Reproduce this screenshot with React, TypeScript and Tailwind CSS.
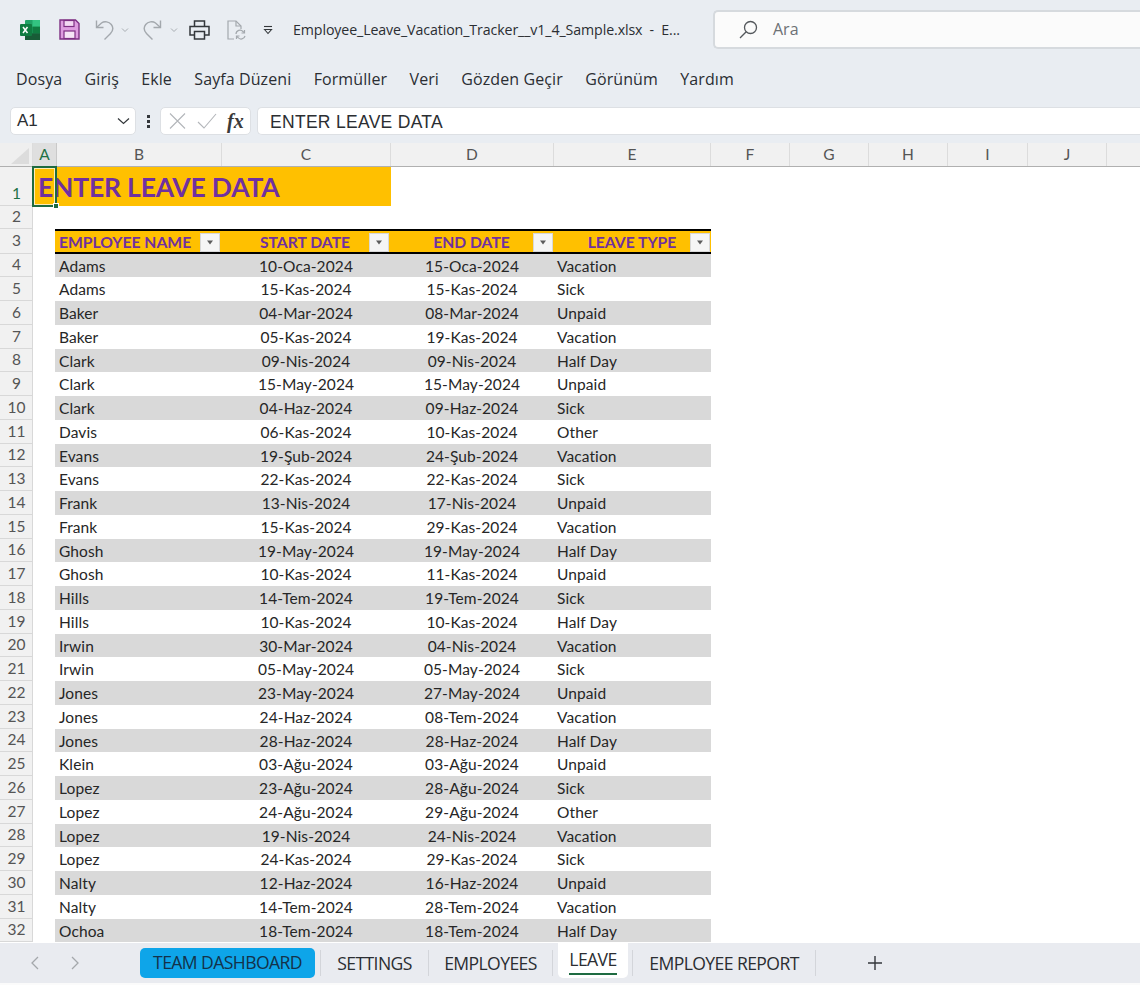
import React from "react";

const rows: [string, string, string, string][] = [
  ["Adams", "10-Oca-2024", "15-Oca-2024", "Vacation"],
  ["Adams", "15-Kas-2024", "15-Kas-2024", "Sick"],
  ["Baker", "04-Mar-2024", "08-Mar-2024", "Unpaid"],
  ["Baker", "05-Kas-2024", "19-Kas-2024", "Vacation"],
  ["Clark", "09-Nis-2024", "09-Nis-2024", "Half Day"],
  ["Clark", "15-May-2024", "15-May-2024", "Unpaid"],
  ["Clark", "04-Haz-2024", "09-Haz-2024", "Sick"],
  ["Davis", "06-Kas-2024", "10-Kas-2024", "Other"],
  ["Evans", "19-Şub-2024", "24-Şub-2024", "Vacation"],
  ["Evans", "22-Kas-2024", "22-Kas-2024", "Sick"],
  ["Frank", "13-Nis-2024", "17-Nis-2024", "Unpaid"],
  ["Frank", "15-Kas-2024", "29-Kas-2024", "Vacation"],
  ["Ghosh", "19-May-2024", "19-May-2024", "Half Day"],
  ["Ghosh", "10-Kas-2024", "11-Kas-2024", "Unpaid"],
  ["Hills", "14-Tem-2024", "19-Tem-2024", "Sick"],
  ["Hills", "10-Kas-2024", "10-Kas-2024", "Half Day"],
  ["Irwin", "30-Mar-2024", "04-Nis-2024", "Vacation"],
  ["Irwin", "05-May-2024", "05-May-2024", "Sick"],
  ["Jones", "23-May-2024", "27-May-2024", "Unpaid"],
  ["Jones", "24-Haz-2024", "08-Tem-2024", "Vacation"],
  ["Jones", "28-Haz-2024", "28-Haz-2024", "Half Day"],
  ["Klein", "03-Ağu-2024", "03-Ağu-2024", "Unpaid"],
  ["Lopez", "23-Ağu-2024", "28-Ağu-2024", "Sick"],
  ["Lopez", "24-Ağu-2024", "29-Ağu-2024", "Other"],
  ["Lopez", "19-Nis-2024", "24-Nis-2024", "Vacation"],
  ["Lopez", "24-Kas-2024", "29-Kas-2024", "Sick"],
  ["Nalty", "12-Haz-2024", "16-Haz-2024", "Unpaid"],
  ["Nalty", "14-Tem-2024", "28-Tem-2024", "Vacation"],
  ["Ochoa", "18-Tem-2024", "18-Tem-2024", "Half Day"],
];

const menu = ["Dosya", "Giriş", "Ekle", "Sayfa Düzeni", "Formüller", "Veri", "Gözden Geçir", "Görünüm", "Yardım"];

const ExcelLogo = () => (
  <svg width="22" height="22" viewBox="0 0 22 22">
    <rect x="6" y="1" width="15" height="20" rx="1" fill="#21a366" />
    <rect x="13.5" y="1" width="7.5" height="6.7" fill="#33c481" />
    <rect x="13.5" y="7.7" width="7.5" height="6.6" fill="#107c41" />
    <rect x="6" y="14.3" width="15" height="6.7" fill="#185c37" />
    <rect x="1" y="5" width="12" height="12" rx="1" fill="#107c41" />
    <path d="M4 8l4.5 6M8.5 8L4 14" stroke="#fff" strokeWidth="1.5" fill="none" />
  </svg>
);

const SaveIcon = () => (
  <svg width="21" height="21" viewBox="0 0 21 21">
    <path d="M1 1h15.500l3.500 3.500V20H1z" fill="#de9de0" stroke="#7d2f83" strokeWidth="1.4" />
    <rect x="5" y="1.500" width="10" height="6" fill="#f3d9f3" stroke="#7d2f83" strokeWidth="1.2" />
    <rect x="5" y="12" width="11" height="7.500" fill="#f6e4f6" stroke="#7d2f83" strokeWidth="1.2" />
  </svg>
);

const Undo = ({ flip }: { flip?: boolean }) => (
  <svg width="19" height="21" viewBox="0 0 19 21" className={flip ? "-scale-x-100" : ""} fill="none" stroke="#a3a8ad" strokeWidth="1.4">
    <path d="M1.500 1.500v7h7" />
    <path d="M1.800 8.200L6.500 4c3-2.200 7.500-1.300 9.800 1.500 2.300 3 1.500 6.500-.8 9l-6 6" />
  </svg>
);

const TinyChevron = () => (
  <svg width="8" height="6" viewBox="0 0 8 6" fill="none" stroke="#a8adb2" strokeWidth="1"><path d="M1 1.500l3 3 3-3" /></svg>
);

const PrintIcon = () => (
  <svg width="21" height="20" viewBox="0 0 21 20" fill="none" stroke="#33373b" strokeWidth="1.5">
    <path d="M5.500 6V1h10v5" />
    <path d="M5 15H1V6.500h19V15h-4" />
    <rect x="5.500" y="11.500" width="10" height="7.500" />
  </svg>
);

const DocSync = () => (
  <svg width="19" height="20" viewBox="0 0 19 20" fill="none" stroke="#a3a8ad" strokeWidth="1.2">
    <path d="M7 19H1V1h8l5 5v3" />
    <path d="M9 1v5h5" />
    <path d="M9 14a4 4 0 0 1 7-2.500l1 1M18 16a4 4 0 0 1-7 1.500l-1-1" />
    <path d="M17.500 10v3h-3M9.500 19v-3h3" />
  </svg>
);

const QatMore = () => (
  <svg width="10" height="10" viewBox="0 0 10 10" fill="none" stroke="#33373b" strokeWidth="1.1">
    <path d="M1 1.500h8" />
    <path d="M1.500 4.500L5 8.500l3.500-4z" />
  </svg>
);

const SearchIcon = () => (
  <svg width="19" height="19" viewBox="0 0 19 19" fill="none" stroke="#54585c" strokeWidth="1.3">
    <circle cx="11.500" cy="7.500" r="6" />
    <path d="M7.200 11.800L1 18" />
  </svg>
);

const FilterBtn = () => (
  <div className="w-[20px] h-[19px] bg-[#f5f5f5] border border-[#d8d8d8] flex items-center justify-center shrink-0">
    <svg width="8" height="5" viewBox="0 0 8 5"><path d="M1 0.500h6L4 4.500z" fill="#5c5c5c" /></svg>
  </div>
);

const Sep = () => <div className="w-px h-[26px] bg-[#d3d5da] shrink-0" />;

const ColHead = ({ w, label, active }: { w: string; label: string; active?: boolean }) => (
  <div className={`${w} h-full flex items-center justify-center border-r text-[15.5px] ${active ? "bg-[#dfdfdf] border-[#c9c9c9] text-[#1e7145]" : "bg-[#f1f1f1] border-[#dcdcdc] text-[#555]"}`}>
    {label}
  </div>
);

const RowHead = ({ n, active, className = "" }: { n: number; active?: boolean; className?: string }) => (
  <div className={`w-[33px] shrink-0 h-full bg-[#f1f1f1] border-r border-[#cfcfcf] flex justify-center pl-[1px] text-[15.5px] ${active ? "text-[#1e7145] bg-[#e6e6e6] items-end" : "text-[#555] items-center"} ${className}`}>
    {n}
  </div>
);

export default function App() {
  return (
    <div className="w-[1140px] h-[985px] overflow-hidden bg-white flex flex-col font-['Lato',sans-serif]">
      {/* Title bar and menu */}
      <div className="h-[143px] shrink-0 bg-[#e9edf2] flex flex-col font-['Open_Sans',sans-serif] text-[#2b2e32]">
        <div className="h-[59px] flex items-center pl-[19px]">
          <ExcelLogo />
          <div className="ml-[18px]"><SaveIcon /></div>
          <div className="ml-[15px]"><Undo /></div>
          <div className="ml-[7px]"><TinyChevron /></div>
          <div className="ml-[14px]"><Undo flip /></div>
          <div className="ml-[8px]"><TinyChevron /></div>
          <div className="ml-[11px]"><PrintIcon /></div>
          <div className="ml-[17px]"><DocSync /></div>
          <div className="ml-[17px]"><QatMore /></div>
          <div className="ml-[20px] w-[400px] text-[14.2px] tracking-[-0.1px] whitespace-pre">Employee_Leave_Vacation_Tracker__v1_4_Sample.xlsx  -  E...</div>
          <div className="ml-[20px] flex-1 h-[39px] -mt-[1px] bg-[#fbfbfb] rounded-l-[5px] border-2 border-r-0 border-[#d6dade] flex items-center pl-[24px] gap-[15px]">
            <SearchIcon />
            <span className="text-[16px] text-[#6d7175]">Ara</span>
          </div>
        </div>
        <div className="h-[40px] flex items-center pl-[16px] gap-[22.3px] text-[16px] tracking-[0.1px]">
          {menu.map((m) => <span key={m}>{m}</span>)}
        </div>
        <div className="h-[28px] mt-[8px] flex items-stretch pl-[10px]">
          <div className="w-[126px] bg-white rounded-[5px] border border-[#dde0e4] flex items-center justify-between pl-[6px] pr-[5px] font-['Liberation_Sans',sans-serif] text-[17px]">
            <span>A1</span>
            <svg width="13" height="8" viewBox="0 0 13 8" fill="none" stroke="#33373b" strokeWidth="1.2"><path d="M1 1.500l5.500 5 5.500-5" /></svg>
          </div>
          <div className="w-[24px] flex flex-col items-center justify-center gap-[2px]">
            <div className="w-[3px] h-[3px] bg-[#33373b]" />
            <div className="w-[3px] h-[3px] bg-[#33373b]" />
            <div className="w-[3px] h-[3px] bg-[#33373b]" />
          </div>
          <div className="w-[91px] bg-white rounded-[5px] border border-[#dde0e4] flex items-center pl-[8px]">
            <svg width="48" height="18" viewBox="0 0 48 18" fill="none" stroke="#b3b6ba" strokeWidth="1.1">
              <path d="M1 1.500l15 15M16 1.500l-15 15" />
              <path d="M29 10l6 6L47 2" />
            </svg>
            <span className="ml-[10px] font-['Liberation_Serif',serif] italic font-bold text-[20px] text-[#3a3a3a] leading-none">fx</span>
          </div>
          <div className="ml-[6px] flex-1 bg-white rounded-l-[5px] border border-r-0 border-[#dde0e4] flex items-center pl-[12px] pt-[2px] font-['Liberation_Sans',sans-serif] text-[17.5px] tracking-[0.3px]">
            ENTER LEAVE DATA
          </div>
        </div>
      </div>

      {/* Column headers */}
      <div className="h-[24px] shrink-0 flex border-b border-[#b0b0b0]">
        <div className="w-[33px] h-full bg-[#efefef] border-r border-[#dcdcdc] flex items-end justify-end pr-[2px] pb-[2px]">
          <svg width="20" height="16" viewBox="0 0 20 16"><path d="M19 0v16H1z" fill="#dcdcdc" /></svg>
        </div>
        <ColHead w="w-[24px]" label="A" active />
        <ColHead w="w-[165px]" label="B" />
        <ColHead w="w-[169px]" label="C" />
        <ColHead w="w-[163px]" label="D" />
        <ColHead w="w-[157px]" label="E" />
        <ColHead w="w-[79px]" label="F" />
        <ColHead w="w-[79px]" label="G" />
        <ColHead w="w-[79px]" label="H" />
        <ColHead w="w-[80px]" label="I" />
        <ColHead w="w-[79px]" label="J" />
        <div className="flex-1 bg-[#f1f1f1]" />
      </div>

      {/* Sheet */}
      <div className="flex-1 flex flex-col min-h-0 text-[#262626]">
        <div className="h-[39px] shrink-0 flex relative">
          <RowHead n={1} active className="border-b border-[#d8d8d8]" />
          <div className="w-[358px] bg-[#ffc000] flex items-center pl-[5px] pt-[2px] font-bold text-[26.5px] text-[#7030a0] tracking-[-0.2px] whitespace-nowrap">
            ENTER LEAVE DATA
          </div>
          <div className="absolute left-[32px] top-[-1px] w-[25px] h-[41px] border-2 border-[#1e6b41] outline outline-1 outline-white/70 -outline-offset-3">
            <div className="absolute right-[-4px] bottom-[-4px] w-[6px] h-[6px] bg-[#1e6b41] border border-white" />
          </div>
        </div>
        <div className="h-[23px] shrink-0 flex">
          <RowHead n={2} className="border-b border-[#d8d8d8]" />
        </div>
        <div className="h-[24.500px] shrink-0 flex">
          <RowHead n={3} className="border-b border-[#d8d8d8]" />
          <div className="w-[22px] shrink-0" />
          <div className="w-[656px] grid grid-cols-[166px_169px_164px_157px] bg-[#ffc000] border-y-2 border-black font-bold text-[#7030a0] text-[15.7px]">
            <div className="flex items-center justify-between pl-[4px] pr-[1px]"><span>EMPLOYEE NAME</span><FilterBtn /></div>
            <div className="flex items-center pr-[1px]"><span className="flex-1 text-center pl-[20px]">START DATE</span><FilterBtn /></div>
            <div className="flex items-center pr-[1px]"><span className="flex-1 text-center pl-[20px]">END DATE</span><FilterBtn /></div>
            <div className="flex items-center pr-[1px]"><span className="flex-1 text-center pl-[20px]">LEAVE TYPE</span><FilterBtn /></div>
          </div>
        </div>
        {rows.map((r, i) => (
          <div key={i} className="h-[23.750px] shrink-0 flex">
            <RowHead n={i + 4} className="border-b border-[#d8d8d8]" />
            <div className="w-[22px] shrink-0" />
            <div className={`w-[656px] grid grid-cols-[166px_169px_164px_157px] items-center pt-[1px] text-[15.5px] tracking-[0.1px] ${i % 2 === 0 ? "bg-[#d9d9d9]" : "bg-white"}`}>
              <div className="pl-[4px]">{r[0]}</div>
              <div className="text-center pl-[1px]">{r[1]}</div>
              <div className="text-center">{r[2]}</div>
              <div className="pl-[3px]">{r[3]}</div>
            </div>
          </div>
        ))}
      </div>

      {/* Tabs */}
      <div className="h-[42px] shrink-0 bg-[#fbfbfb] mt-auto">
        <div className="h-[40px] bg-[#e9ebf0] flex items-center font-['Open_Sans',sans-serif] text-[17.6px] tracking-[-0.6px] text-[#2b2e32]">
          <div className="w-[140px] flex items-center pl-[30px] gap-[30px] shrink-0">
            <svg width="10" height="14" viewBox="0 0 10 14" fill="none" stroke="#a4a7ab" strokeWidth="1.3"><path d="M8 1L2 7l6 6" /></svg>
            <svg width="10" height="14" viewBox="0 0 10 14" fill="none" stroke="#a4a7ab" strokeWidth="1.3"><path d="M2 1l6 6-6 6" /></svg>
          </div>
          <div className="w-[175px] h-[30px] rounded-[5px] bg-[#0ea5e9] flex items-center justify-center shrink-0 text-[#14324a] -mt-[1px]">TEAM DASHBOARD</div>
          <div className="w-[5px]" />
          <Sep />
          <div className="w-[107px] text-center shrink-0">SETTINGS</div>
          <Sep />
          <div className="w-[123px] text-center shrink-0">EMPLOYEES</div>
          <Sep />
          <div className="ml-[5px] w-[70px] h-[35px] self-start bg-white rounded-b-[5px] flex flex-col items-center shrink-0 pt-[3px]">
            <span className="leading-[26px] border-b-[2px] border-[#1e6b41] pb-[1px]">LEAVE</span>
          </div>
          <div className="w-[4px]" />
          <Sep />
          <div className="w-[182px] text-center shrink-0">EMPLOYEE REPORT</div>
          <Sep />
          <div className="ml-[51px]">
            <svg width="16" height="16" viewBox="0 0 16 16" stroke="#33373b" strokeWidth="1.4"><path d="M8 1v14M1 8h14" /></svg>
          </div>
        </div>
      </div>
    </div>
  );
}
